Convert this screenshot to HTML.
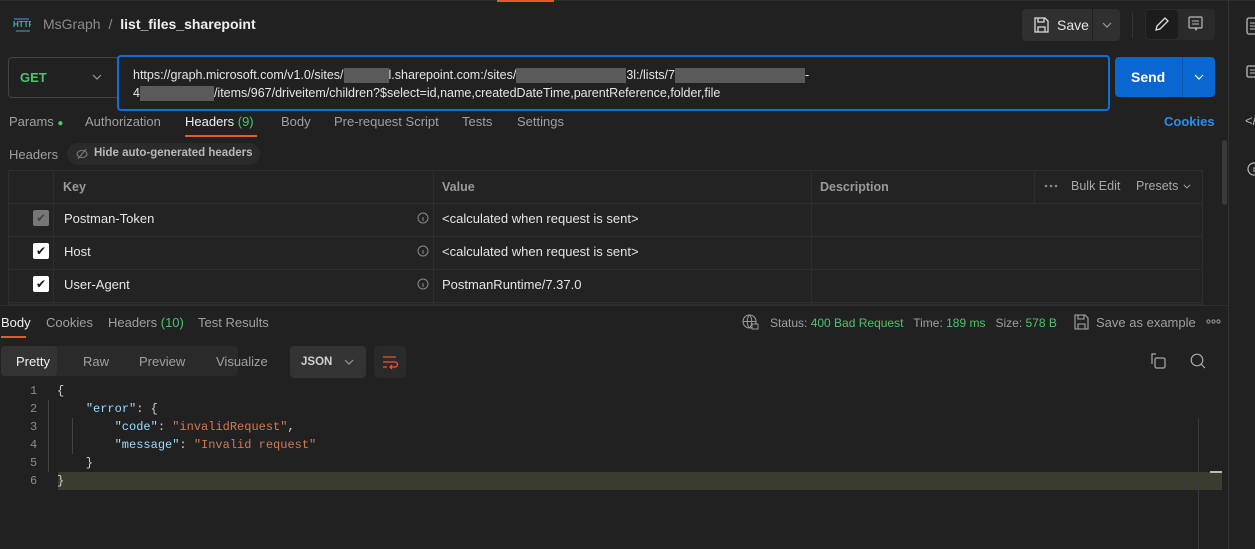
<!DOCTYPE html>
<html><head><meta charset="utf-8"><style>
*{box-sizing:border-box;margin:0;padding:0}
body{width:1255px;height:549px;background:#212121;font-family:"Liberation Sans",sans-serif;color:#d0d0d0;position:relative;overflow:hidden;font-size:13px}
.a{position:absolute;white-space:nowrap}
.g{color:#4cc56c}
.m{font-family:"Liberation Mono",monospace;font-size:12px}
.blur{display:inline-block;background:#5a5a5a;height:15px;vertical-align:middle}
</style></head><body>
<svg width="0" height="0" style="position:absolute"><defs><path id="chev" d="M1 1l4 4 4-4" fill="none" stroke-width="1.2"/></defs></svg>
<div class="a" style="left:0;top:0;width:1255px;height:1px;background:#2c2c2c"></div>
<div class="a" style="left:497px;top:0;width:57px;height:2px;background:#e8582a"></div>
<!-- sidebar -->
<div class="a" style="left:1228px;top:0;width:1px;height:549px;background:#333"></div>
<svg class="a" style="left:1246px;top:17px" width="12" height="18"><rect x="1" y="1" width="10" height="16" rx="2" fill="none" stroke="#bbb" stroke-width="1.3"/><path d="M4 6h6M4 9h6M4 12h6" stroke="#bbb"/></svg>
<svg class="a" style="left:1246px;top:65px" width="12" height="16"><rect x="1" y="1" width="10" height="11" rx="1.5" fill="none" stroke="#bbb" stroke-width="1.3"/><path d="M4 5h5M4 8h5" stroke="#bbb"/></svg>
<div class="a" style="left:1245px;top:113px;color:#bbb;font-size:13px">&lt;/</div>
<svg class="a" style="left:1247px;top:161px" width="12" height="16"><circle cx="7" cy="8" r="6" fill="none" stroke="#bbb" stroke-width="1.2"/><path d="M7 6v5" stroke="#bbb"/></svg>
<!-- top bar -->
<svg class="a" style="left:13px;top:17px" width="18" height="16"><text x="0" y="10" font-size="8" fill="#3fa9c9" font-family="Liberation Sans" font-weight="bold">HTTP</text><path d="M1 2h15M3 14h14" stroke="#3fa9c9" stroke-width="1"/></svg>
<div class="a" style="left:43px;top:16px;font-size:14px;color:#8a8a8a">MsGraph <span style="margin:0 4px">/</span> <span style="color:#f0f0f0;font-weight:bold">list_files_sharepoint</span></div>
<div class="a" style="left:1022px;top:9px;width:98px;height:32px;background:#303030;border-radius:4px"></div>
<div class="a" style="left:1092px;top:9px;width:1px;height:32px;background:#212121"></div>
<svg class="a" style="left:1034px;top:17px" width="15" height="16"><path d="M1 1h10l3 3v11H1z M4 1v4h6V1 M4 15v-5h7v5" fill="none" stroke="#ddd" stroke-width="1.3"/></svg>
<div class="a" style="left:1057px;top:17px;font-size:14px;color:#e6e6e6">Save</div>
<svg class="a" style="left:1102px;top:22px" width="10" height="7" stroke="#999"><use href="#chev"/></svg>
<div class="a" style="left:1132px;top:12px;width:1px;height:26px;background:#333"></div>
<div class="a" style="left:1145px;top:9px;width:70px;height:31px;background:#2a2a2a;border-radius:4px"></div>
<div class="a" style="left:1146px;top:10px;width:32px;height:29px;background:#1c1c1c;border-radius:4px"></div>
<svg class="a" style="left:1154px;top:16px" width="16" height="16"><path d="M2 14l1-4 8-8 3 3-8 8z" fill="none" stroke="#ddd" stroke-width="1.3"/></svg>
<svg class="a" style="left:1188px;top:16px" width="16" height="16"><rect x="1" y="1" width="13" height="11" rx="1" fill="none" stroke="#bbb" stroke-width="1.2"/><path d="M4 5h7M4 8h7M7 12l1 2 1-2" stroke="#bbb" fill="none"/></svg>
<!-- url bar -->
<div class="a" style="left:8px;top:57px;width:110px;height:41px;border:1px solid #444;border-radius:4px 0 0 4px"></div>
<div class="a" style="left:20px;top:70px;font-weight:bold;color:#4cc56c;font-size:13px">GET</div>
<svg class="a" style="left:92px;top:74px" width="10" height="7" stroke="#999"><use href="#chev"/></svg>
<div class="a" style="left:117px;top:55px;width:993px;height:56px;border:2px solid #0e6fe0;border-radius:4px"></div>
<div class="a" style="left:133px;top:66px;font-size:12.5px;color:#e6e6e6;line-height:18px">https://graph.microsoft.com/v1.0/sites/<span class="blur" style="width:45px"></span>l.sharepoint.com:/sites/<span class="blur" style="width:110px"></span>3l:/lists/7<span class="blur" style="width:130px"></span>-<br>4<span class="blur" style="width:74px"></span>/items/967/driveitem/children?$select=id,name,createdDateTime,parentReference,folder,file</div>
<div class="a" style="left:1115px;top:57px;width:100px;height:40px;background:#0a66d1;border-radius:4px"></div>
<div class="a" style="left:1182px;top:57px;width:1px;height:40px;background:#0954ad"></div>
<div class="a" style="left:1131px;top:69px;font-weight:bold;font-size:14px;color:#fff">Send</div>
<svg class="a" style="left:1194px;top:74px" width="10" height="7" stroke="#fff"><use href="#chev"/></svg>
<!-- tabs -->
<div class="a" style="left:9px;top:114px;color:#a0a0a0">Params <span class="g" style="font-size:10px">&#9679;</span></div>
<div class="a" style="left:85px;top:114px;color:#a0a0a0">Authorization</div>
<div class="a" style="left:185px;top:114px;color:#f0f0f0">Headers <span class="g">(9)</span></div>
<div class="a" style="left:185px;top:135px;width:72px;height:2px;background:#e8582a"></div>
<div class="a" style="left:281px;top:114px;color:#a0a0a0">Body</div>
<div class="a" style="left:334px;top:114px;color:#a0a0a0">Pre-request Script</div>
<div class="a" style="left:462px;top:114px;color:#a0a0a0">Tests</div>
<div class="a" style="left:517px;top:114px;color:#a0a0a0">Settings</div>
<div class="a" style="left:1164px;top:114px;color:#2d8fea;font-weight:bold">Cookies</div>
<div class="a" style="left:9px;top:147px;color:#a0a0a0">Headers</div>
<div class="a" style="left:67px;top:143px;width:193px;height:22px;background:#2a2a2a;border-radius:11px"></div>
<svg class="a" style="left:76px;top:148px" width="12" height="12"><ellipse cx="6" cy="6" rx="5" ry="3.5" fill="none" stroke="#777" stroke-width="1.1"/><path d="M2 11L10 1" stroke="#777" stroke-width="1.1"/></svg>
<div class="a" style="left:94px;top:147px;color:#b8b8b8;font-size:11.5px;font-weight:bold">Hide auto-generated headers</div>
<!-- table -->
<div class="a" style="left:8px;top:170px;width:1195px;height:135px;border:1px solid #2e2e2e;background:#232323"></div>
<div class="a" style="left:8px;top:203px;width:1195px;height:1px;background:#2e2e2e"></div>
<div class="a" style="left:8px;top:236px;width:1195px;height:1px;background:#2e2e2e"></div>
<div class="a" style="left:8px;top:269px;width:1195px;height:1px;background:#2e2e2e"></div>
<div class="a" style="left:8px;top:302px;width:1195px;height:1px;background:#2e2e2e"></div>
<div class="a" style="left:53px;top:170px;width:1px;height:135px;background:#2e2e2e"></div>
<div class="a" style="left:433px;top:170px;width:1px;height:135px;background:#2e2e2e"></div>
<div class="a" style="left:811px;top:170px;width:1px;height:135px;background:#2e2e2e"></div>
<div class="a" style="left:1034px;top:170px;width:1px;height:33px;background:#2e2e2e"></div>
<div class="a" style="left:63px;top:180px;color:#9a9a9a;font-weight:bold;font-size:12.5px">Key</div>
<div class="a" style="left:442px;top:180px;color:#9a9a9a;font-weight:bold;font-size:12.5px">Value</div>
<div class="a" style="left:820px;top:180px;color:#9a9a9a;font-weight:bold;font-size:12.5px">Description</div>
<svg class="a" style="left:1044px;top:184px" width="14" height="4" fill="#888"><circle cx="2" cy="2" r="1.3"/><circle cx="7" cy="2" r="1.3"/><circle cx="12" cy="2" r="1.3"/></svg>
<div class="a" style="left:1071px;top:179px;color:#a8a8a8;font-size:12.5px">Bulk Edit</div>
<div class="a" style="left:1136px;top:179px;color:#a8a8a8;font-size:12.5px">Presets</div>
<svg class="a" style="left:1183px;top:184px" width="10" height="7" stroke="#a8a8a8"><use href="#chev" transform="scale(.8)"/></svg>
<div class="a" style="left:33px;top:210px;width:16px;height:16px;background:#777;border-radius:2px;color:#444;font-size:12px;text-align:center;line-height:16px">&#10004;</div>
<div class="a" style="left:33px;top:243px;width:16px;height:16px;background:#fff;border-radius:2px;color:#111;font-size:12px;text-align:center;line-height:16px">&#10004;</div>
<div class="a" style="left:33px;top:276px;width:16px;height:16px;background:#fff;border-radius:2px;color:#111;font-size:12px;text-align:center;line-height:16px">&#10004;</div>
<div class="a" style="left:64px;top:211px;color:#e6e6e6">Postman-Token</div>
<div class="a" style="left:64px;top:244px;color:#e6e6e6">Host</div>
<div class="a" style="left:64px;top:277px;color:#e6e6e6">User-Agent</div>
<svg class="a" style="left:417px;top:212px" width="12" height="12"><circle cx="6" cy="6" r="5" fill="none" stroke="#888"/><path d="M6 5v4" stroke="#888"/></svg>
<svg class="a" style="left:417px;top:245px" width="12" height="12"><circle cx="6" cy="6" r="5" fill="none" stroke="#888"/><path d="M6 5v4" stroke="#888"/></svg>
<svg class="a" style="left:417px;top:278px" width="12" height="12"><circle cx="6" cy="6" r="5" fill="none" stroke="#888"/><path d="M6 5v4" stroke="#888"/></svg>
<div class="a" style="left:442px;top:211px;color:#e6e6e6">&lt;calculated when request is sent&gt;</div>
<div class="a" style="left:442px;top:244px;color:#e6e6e6">&lt;calculated when request is sent&gt;</div>
<div class="a" style="left:442px;top:277px;color:#e6e6e6">PostmanRuntime/7.37.0</div>
<div class="a" style="left:1222px;top:140px;width:5px;height:65px;background:#3a3a3a;border-radius:3px"></div>
<div class="a" style="left:0;top:305px;width:1228px;height:1px;background:#2e2e2e"></div>
<!-- response -->
<div class="a" style="left:1px;top:315px;color:#f0f0f0">Body</div>
<div class="a" style="left:1px;top:336px;width:25px;height:2px;background:#e8582a"></div>
<div class="a" style="left:46px;top:315px;color:#a0a0a0">Cookies</div>
<div class="a" style="left:108px;top:315px;color:#a0a0a0">Headers <span class="g">(10)</span></div>
<div class="a" style="left:198px;top:315px;color:#a0a0a0">Test Results</div>
<svg class="a" style="left:742px;top:314px" width="17" height="17"><circle cx="7.5" cy="7.5" r="6.5" fill="none" stroke="#999" stroke-width="1.1"/><path d="M1 7.5h13M7.5 1c-3 3-3 10 0 13M7.5 1c3 3 3 10 0 13" fill="none" stroke="#999"/><rect x="10" y="10" width="6" height="5" fill="#212121" stroke="#999"/></svg>
<div class="a" style="left:770px;top:316px;font-size:12px;color:#a0a0a0">Status: <span class="g">400 Bad Request</span> &nbsp; Time: <span class="g">189 ms</span> &nbsp; Size: <span class="g">578 B</span></div>
<svg class="a" style="left:1074px;top:314px" width="15" height="16"><path d="M1 1h10l3 3v11H1z M4 1v4h6V1 M4 15v-5h7v5" fill="none" stroke="#aaa" stroke-width="1.1"/></svg>
<div class="a" style="left:1096px;top:315px;color:#a0a0a0">Save as example</div>
<svg class="a" style="left:1206px;top:319px" width="15" height="5"><circle cx="2.5" cy="2.5" r="1.6" fill="none" stroke="#999"/><circle cx="7.5" cy="2.5" r="1.6" fill="none" stroke="#999"/><circle cx="12.5" cy="2.5" r="1.6" fill="none" stroke="#999"/></svg>
<div class="a" style="left:1px;top:346px;width:237px;height:30px;background:#2a2a2a;border-radius:4px"></div>
<div class="a" style="left:1px;top:346px;width:56px;height:30px;background:#333;border-radius:4px"></div>
<div class="a" style="left:16px;top:354px;color:#f0f0f0">Pretty</div>
<div class="a" style="left:83px;top:354px;color:#a0a0a0">Raw</div>
<div class="a" style="left:139px;top:354px;color:#a0a0a0">Preview</div>
<div class="a" style="left:216px;top:354px;color:#a0a0a0">Visualize</div>
<div class="a" style="left:290px;top:346px;width:76px;height:32px;background:#333;border-radius:4px"></div>
<div class="a" style="left:301px;top:356px;color:#d0d0d0;font-weight:bold;font-size:11.5px">JSON</div>
<svg class="a" style="left:344px;top:359px" width="10" height="7" stroke="#999"><use href="#chev"/></svg>
<div class="a" style="left:374px;top:346px;width:32px;height:32px;background:#2a2a2a;border-radius:4px"></div>
<svg class="a" style="left:381px;top:353px" width="18" height="18"><path d="M2 4h13M2 9h12a2.5 2.5 0 010 5H9M11 12l-2 2 2 2M2 14h4" fill="none" stroke="#e8582a" stroke-width="1.3"/></svg>
<svg class="a" style="left:1151px;top:353px" width="16" height="16"><path d="M5 1H1v10" fill="none" stroke="#aaa" stroke-width="1.2"/><rect x="4" y="5" width="10" height="10" rx="1.5" fill="none" stroke="#aaa" stroke-width="1.2"/></svg>
<svg class="a" style="left:1190px;top:353px" width="17" height="17"><circle cx="7" cy="7" r="5.8" fill="none" stroke="#aaa" stroke-width="1.2"/><path d="M11 11l4 4" stroke="#aaa" stroke-width="1.2"/></svg>
<!-- code -->
<div class="a" style="left:58px;top:472px;width:1164px;height:18px;background:#3b3b2f"></div>
<div class="a" style="left:1198px;top:418px;width:1px;height:131px;background:#3a3a3a"></div>
<div class="a" style="left:1210px;top:471px;width:12px;height:2px;background:#bbb"></div>
<div class="a" style="left:48px;top:400px;width:1px;height:72px;background:#444"></div>
<div class="a" style="left:72px;top:418px;width:1px;height:36px;background:#444"></div>
<div class="a m" style="left:30px;top:382px;line-height:18px;color:#8a8a8a;text-align:right">1<br>2<br>3<br>4<br>5<br>6</div>
<div class="a m" style="left:57px;top:382px;line-height:18px;color:#d0d0d0">{<br>&nbsp;&nbsp;&nbsp;&nbsp;<span style="color:#9cdcfe">"error"</span>: {<br>&nbsp;&nbsp;&nbsp;&nbsp;&nbsp;&nbsp;&nbsp;&nbsp;<span style="color:#9cdcfe">"code"</span>: <span style="color:#ce7b55">"invalidRequest"</span>,<br>&nbsp;&nbsp;&nbsp;&nbsp;&nbsp;&nbsp;&nbsp;&nbsp;<span style="color:#9cdcfe">"message"</span>: <span style="color:#ce7b55">"Invalid request"</span><br>&nbsp;&nbsp;&nbsp;&nbsp;}<br>}</div>
</body></html>
